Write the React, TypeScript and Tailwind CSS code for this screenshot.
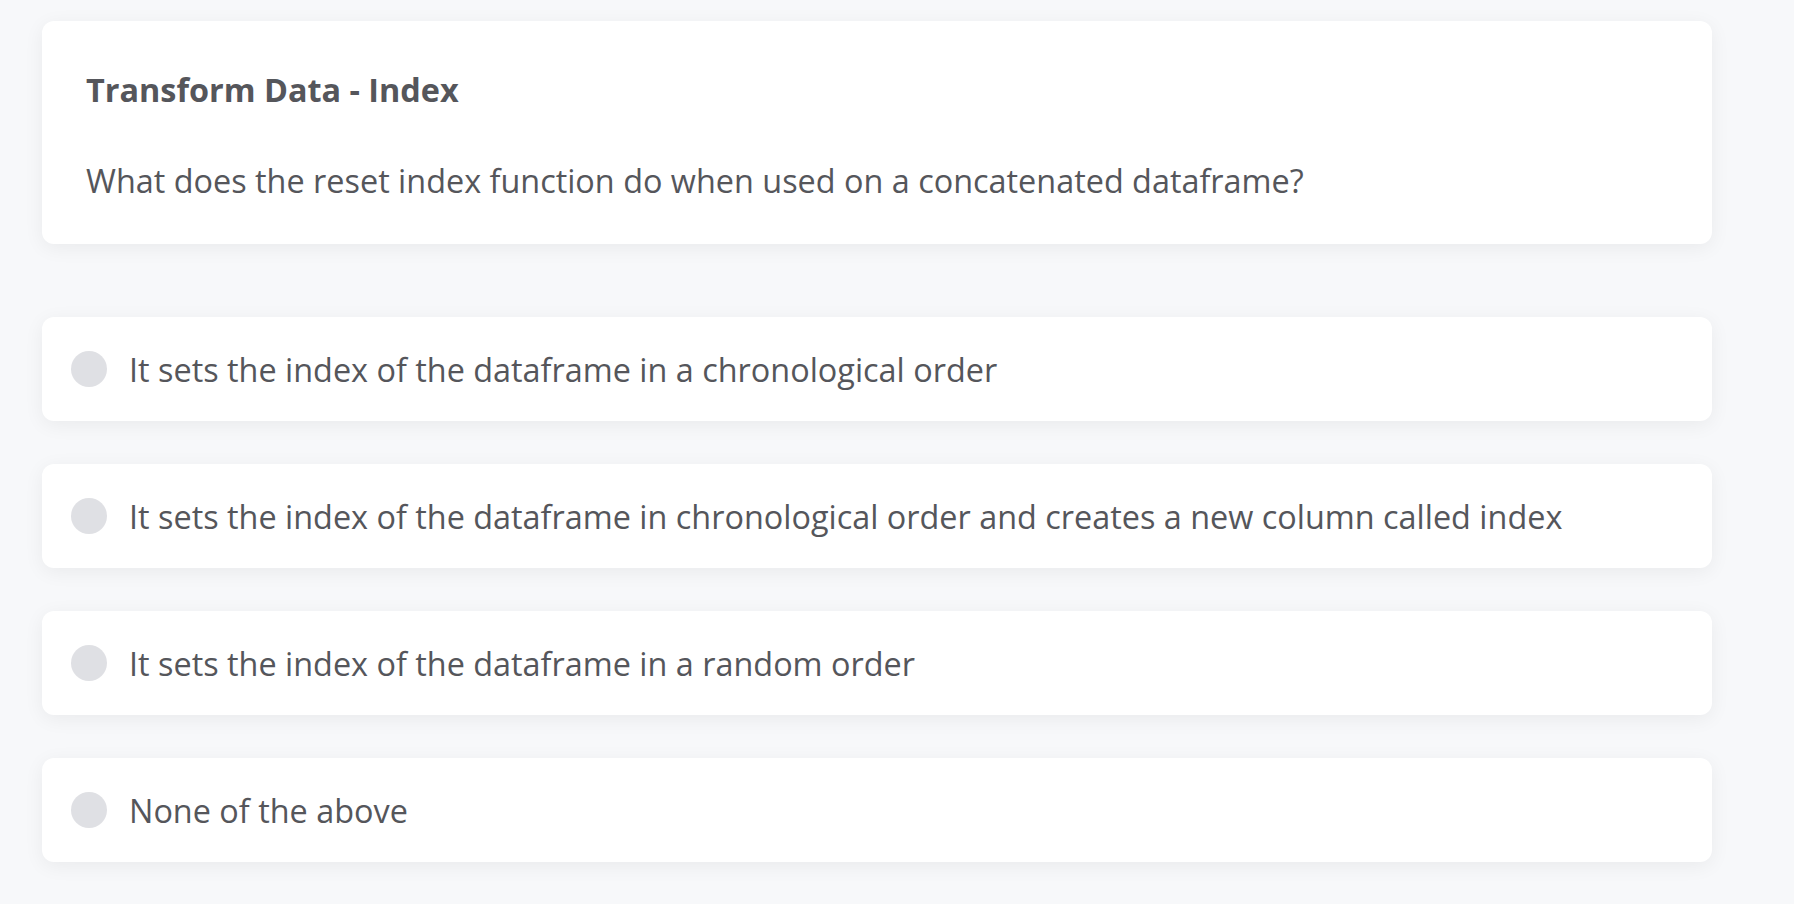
import React from 'react';

const options = [
  'It sets the index of the dataframe in a chronological order',
  'It sets the index of the dataframe in chronological order and creates a new column called index',
  'It sets the index of the dataframe in a random order',
  'None of the above',
];

export default function App() {
  return (
    <div
      className="min-h-[904px] w-full bg-[#f7f8fa] pt-[21px] pb-[43px] pl-[42px] text-[#55565b]"
      style={{ fontFamily: '"Open Sans", "Noto Sans", sans-serif' }}
    >
      <div className="w-[1670px]">
        <div className="rounded-[12px] bg-white px-[44px] pt-[44px] pb-[40px] shadow-[0_4px_20px_rgba(0,0,0,0.06)]">
          <h2 className="text-[32.4px] font-bold leading-[48px]">Transform Data - Index</h2>
          <p className="mt-[43px] text-[32.4px] leading-[48px]">
            What does the reset index function do when used on a concatenated dataframe?
          </p>
        </div>

        <div className="mt-[73px] flex flex-col gap-[43px]">
          {options.map((opt) => (
            <label
              key={opt}
              className="flex h-[104px] cursor-pointer items-center gap-[22px] rounded-[12px] bg-white pl-[29px] shadow-[0_4px_20px_rgba(0,0,0,0.06)]"
            >
              <span className="h-[36px] w-[36px] shrink-0 rounded-full bg-[#dfe0e4]" />
              <span className="text-[32.4px] leading-[48px]">{opt}</span>
            </label>
          ))}
        </div>
      </div>
    </div>
  );
}
